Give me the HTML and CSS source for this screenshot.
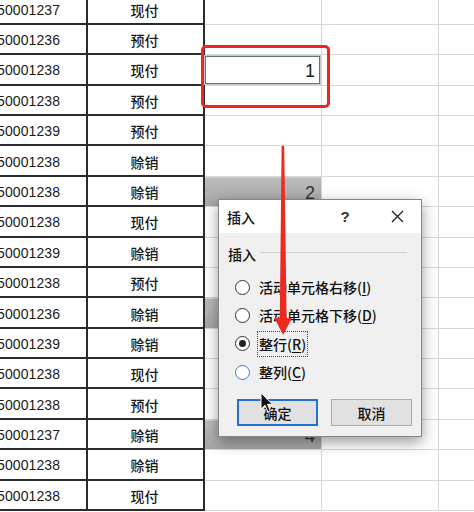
FILE: index.html
```html
<!DOCTYPE html>
<html lang="zh-CN">
<head>
<meta charset="utf-8">
<title>插入</title>
<link rel="stylesheet" href="styles.css">
</head>
<body>
<div class="sheet">
  <div class="row"><div class="c1">50001237</div><div class="c2">现付</div><div class="c3"></div><div class="c4"></div><div class="c5"></div></div>
  <div class="row"><div class="c1">50001236</div><div class="c2">预付</div><div class="c3"></div><div class="c4"></div><div class="c5"></div></div>
  <div class="row"><div class="c1">50001238</div><div class="c2">现付</div><div class="c3"><div class="sel">1</div></div><div class="c4"></div><div class="c5"></div></div>
  <div class="row"><div class="c1">50001238</div><div class="c2">预付</div><div class="c3"></div><div class="c4"></div><div class="c5"></div></div>
  <div class="row"><div class="c1">50001239</div><div class="c2">预付</div><div class="c3"></div><div class="c4"></div><div class="c5"></div></div>
  <div class="row"><div class="c1">50001238</div><div class="c2">赊销</div><div class="c3"></div><div class="c4"></div><div class="c5"></div></div>
  <div class="row"><div class="c1">50001238</div><div class="c2">赊销</div><div class="c3 shade">2</div><div class="c4"></div><div class="c5"></div></div>
  <div class="row"><div class="c1">50001238</div><div class="c2">现付</div><div class="c3"></div><div class="c4"></div><div class="c5"></div></div>
  <div class="row"><div class="c1">50001239</div><div class="c2">赊销</div><div class="c3"></div><div class="c4"></div><div class="c5"></div></div>
  <div class="row"><div class="c1">50001238</div><div class="c2">预付</div><div class="c3"></div><div class="c4"></div><div class="c5"></div></div>
  <div class="row"><div class="c1">50001236</div><div class="c2">赊销</div><div class="c3 shade"></div><div class="c4"></div><div class="c5"></div></div>
  <div class="row"><div class="c1">50001239</div><div class="c2">赊销</div><div class="c3"></div><div class="c4"></div><div class="c5"></div></div>
  <div class="row"><div class="c1">50001238</div><div class="c2">现付</div><div class="c3"></div><div class="c4"></div><div class="c5"></div></div>
  <div class="row"><div class="c1">50001238</div><div class="c2">预付</div><div class="c3"></div><div class="c4"></div><div class="c5"></div></div>
  <div class="row"><div class="c1">50001237</div><div class="c2">赊销</div><div class="c3 shade">4</div><div class="c4"></div><div class="c5"></div></div>
  <div class="row"><div class="c1">50001238</div><div class="c2">赊销</div><div class="c3"></div><div class="c4"></div><div class="c5"></div></div>
  <div class="row"><div class="c1">50001238</div><div class="c2">现付</div><div class="c3"></div><div class="c4"></div><div class="c5"></div></div>
</div>

<div class="redbox"></div>

<div class="dialog">
  <div class="titlebar">
    <span class="title">插入</span>
    <span class="help">?</span>
    <span class="close">
      <svg width="13" height="13" viewBox="0 0 13 13"><path d="M1 1 L12 12 M12 1 L1 12" stroke="#222" stroke-width="1.3" fill="none"/></svg>
    </span>
  </div>
  <div class="body">
    <div class="group"><span class="glabel">插入</span><span class="gline"></span></div>
    <div class="opts">
      <div class="opt"><span class="radio"></span><span class="olabel">活动单元格右移(<u>I</u>)</span></div>
      <div class="opt"><span class="radio"></span><span class="olabel">活动单元格下移(<u>D</u>)</span></div>
      <div class="opt"><span class="radio checked"></span><span class="olabel focus">整行(<u>R</u>)</span></div>
      <div class="opt"><span class="radio hover"></span><span class="olabel">整列(<u>C</u>)</span></div>
    </div>
    <div class="buttons">
      <button class="btn default">确定</button>
      <button class="btn">取消</button>
    </div>
  </div>
</div>

<svg class="arrow" width="30" height="200" viewBox="268 140 30 200">
  <polygon points="281.6,146 284.2,146 286.6,318 292,318 283.2,335 274.4,318 279.8,318" fill="#ec2a1f"/>
</svg>

<svg class="cursor" width="16" height="22" viewBox="0 0 16 22">
  <path d="M1 1 L1 17 L5 13.2 L8 20 L10.4 19 L7.5 12.3 L12.6 12.3 Z" fill="#111" stroke="#fff" stroke-width="1" stroke-linejoin="round"/>
</svg>
</body>
</html>
```
FILE: styles.css
```css
html, body {
  margin: 0;
  padding: 0;
  background: #fff;
}
body {
  width: 474px;
  height: 512px;
  overflow: hidden;
  position: relative;
  font-family: "Liberation Sans", "Noto Sans CJK SC", sans-serif;
}
.sheet {
  margin-top: -5.6px;
}
.row {
  display: grid;
  grid-template-columns: 88px 117px 117px 117px 1fr;
  height: 30.4px;
}
.row > div {
  box-sizing: border-box;
  height: 30.4px;
}
.c1, .c2 {
  border-right: 2px solid #2b2b2b;
  border-bottom: 2px solid #2b2b2b;
  color: #1a1a1a;
  font-size: 14px;
  display: flex;
  align-items: center;
  padding-top: 2px;
}
.c1 {
  text-indent: -3px;
  letter-spacing: 0.1px;
  font-family: "Liberation Sans", sans-serif;
}
.c2 {
  justify-content: center;
  font-family: "Noto Sans CJK SC", sans-serif;
  font-weight: 500;
  padding-right: 2px;
}
.c3, .c4 {
  border-right: 1px solid #d7d7d7;
  border-bottom: 1px solid #d7d7d7;
}
.c5 {
  border-bottom: 1px solid #d7d7d7;
}
.sel {
  box-sizing: border-box;
  margin: 1px 1px 0 0;
  height: 28px;
  border: 1.6px solid #5a7b69;
  box-shadow: 0 0 0 1px #c9c9c9;
  background: #fff;
  display: flex;
  align-items: flex-end;
  justify-content: flex-end;
  padding: 0 4px 1px 0;
  font-size: 18px;
  line-height: 22px;
  color: #222;
}
.shade {
  background: linear-gradient(to bottom, #bcbcbc, #a6a6a6);
  border-top: 1px solid #cfcfcf;
  display: flex;
  align-items: flex-end;
  justify-content: flex-end;
  padding: 0 6px 2px 0;
  font-size: 18px;
  line-height: 22px;
  color: #333;
}
.redbox {
  position: absolute;
  left: 201px;
  top: 45px;
  width: 129px;
  height: 63px;
  box-sizing: border-box;
  border: 3px solid #ee2622;
  border-radius: 5px;
}
.dialog {
  position: absolute;
  left: 218px;
  top: 199px;
  width: 204px;
  height: 238px;
  box-sizing: border-box;
  border: 1px solid #858585;
  background: #f0f0f0;
  box-shadow: 0 5px 14px rgba(0, 0, 0, 0.4);
  display: flex;
  flex-direction: column;
  font-family: "Noto Sans CJK SC", sans-serif;
  font-weight: 500;
  color: #111;
}
.titlebar {
  height: 33px;
  background: #fff;
  display: flex;
  align-items: center;
  padding-left: 8px;
  flex-shrink: 0;
}
.title {
  flex: 1;
  font-size: 14px;
}
.help {
  width: 20px;
  text-align: center;
  font-family: "Liberation Sans", sans-serif;
  font-size: 15px;
  font-weight: bold;
  color: #333;
}
.close {
  width: 24px;
  margin-left: 30px;
  margin-right: 12px;
  display: flex;
  justify-content: center;
}
.body {
  flex: 1;
  padding: 0 9px;
}
.group {
  display: flex;
  align-items: center;
  margin-top: 11px;
  height: 20px;
}
.glabel {
  font-size: 14px;
}
.gline {
  flex: 1;
  height: 1px;
  background: #d2d2d2;
  margin: -3px 5px 0 4px;
}
.opts {
  margin-top: 9px;
}
.opt {
  height: 28.3px;
  display: flex;
  align-items: center;
  font-size: 14px;
}
.radio {
  box-sizing: border-box;
  width: 15px;
  height: 15px;
  border-radius: 50%;
  border: 1.5px solid #333;
  background: #fff;
  margin-left: 7px;
  margin-right: 9px;
  position: relative;
  flex-shrink: 0;
}
.radio.checked::after {
  content: "";
  position: absolute;
  left: 2.5px;
  top: 2.5px;
  width: 7px;
  height: 7px;
  border-radius: 50%;
  background: #222;
}
.radio.hover {
  border-color: #3a7fd0;
}
.olabel u {
  text-decoration-thickness: 1px;
  text-underline-offset: 2px;
}
.focus {
  border: 1px dotted #444;
  padding: 2px 1px;
  margin-left: -2px;
}
.buttons {
  display: flex;
  gap: 13px;
  margin-top: 13px;
  padding-left: 9px;
}
.btn {
  box-sizing: border-box;
  width: 82px;
  height: 27px;
  border: 1px solid #adadad;
  background: #e1e1e1;
  font-family: "Noto Sans CJK SC", sans-serif;
  font-weight: 500;
  font-size: 14px;
  color: #111;
  padding: 0;
  margin: 0;
}
.btn.default {
  border: 2px solid #2370d0;
}
.arrow {
  position: absolute;
  left: 268px;
  top: 140px;
}
.cursor {
  position: absolute;
  left: 260px;
  top: 392px;
}
```
